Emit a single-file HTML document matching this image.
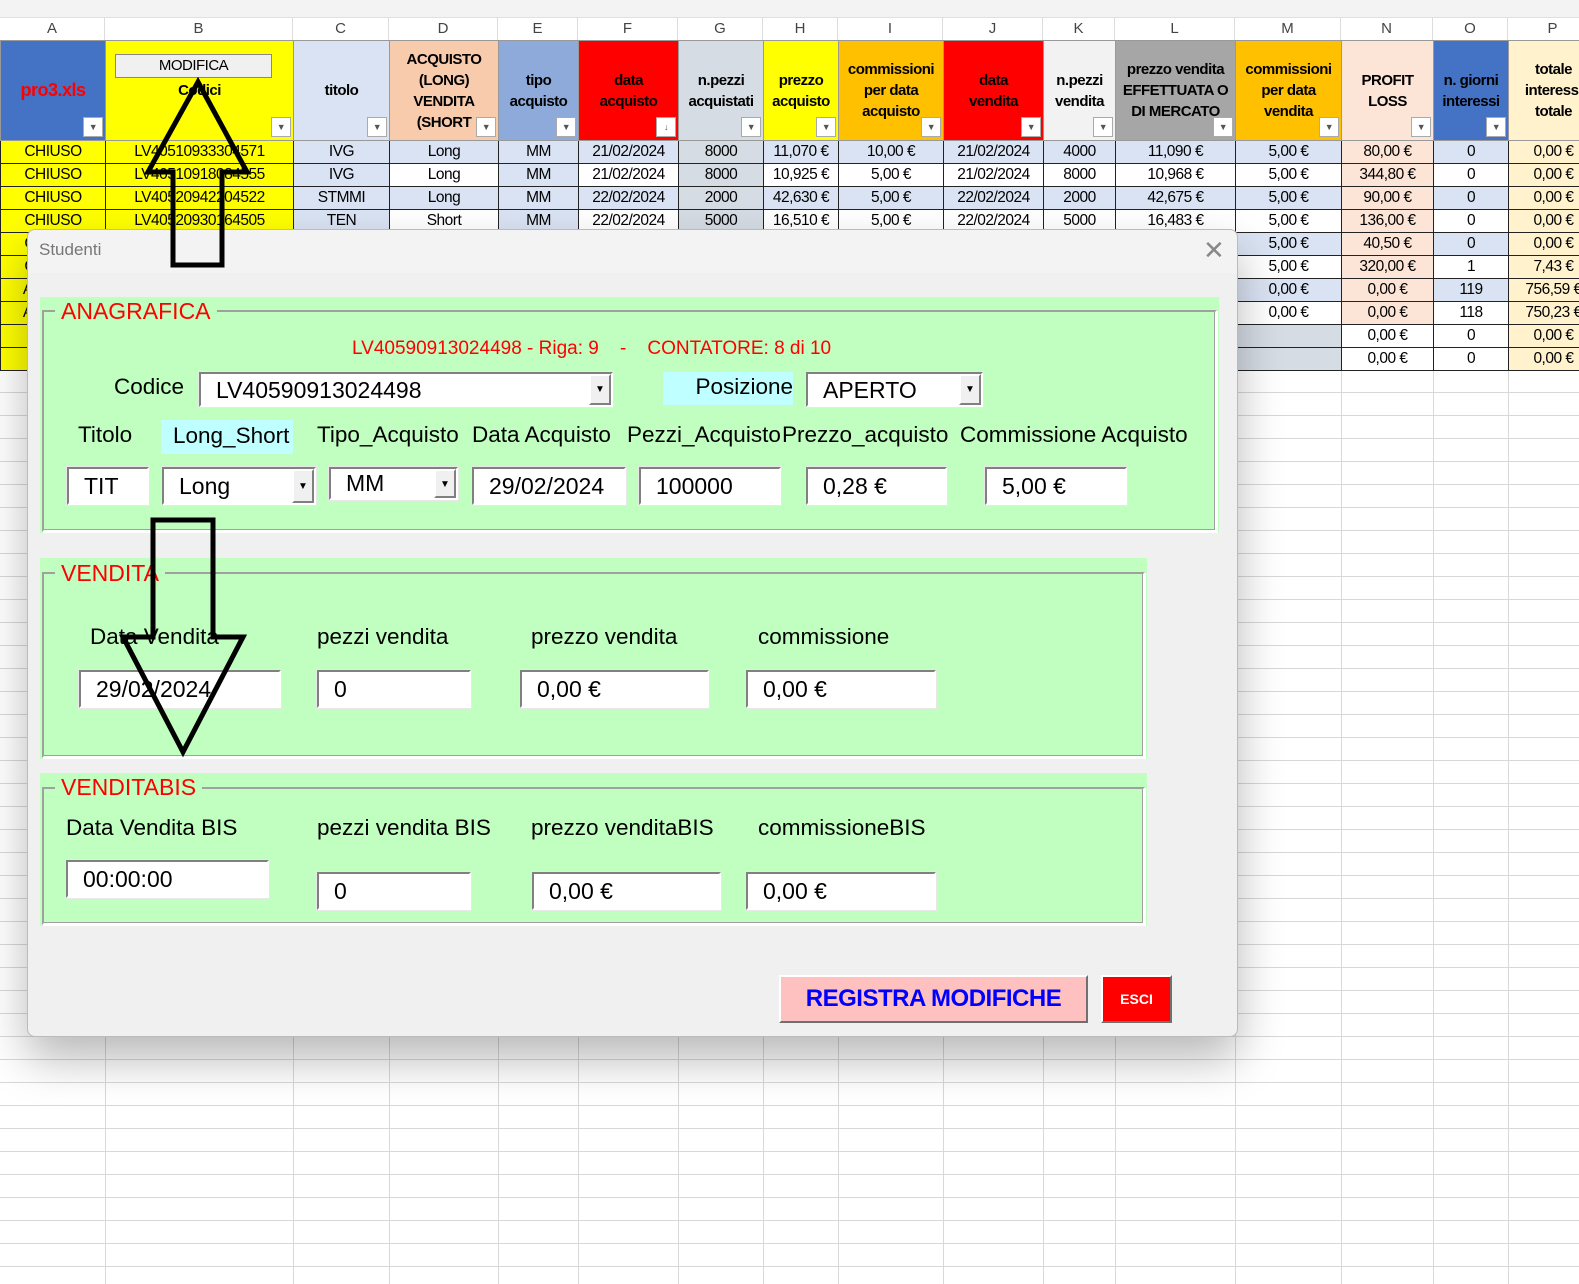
<!DOCTYPE html>
<html><head><meta charset="utf-8">
<style>
*{box-sizing:border-box;margin:0;padding:0}
body{width:1579px;height:1284px;overflow:hidden;background:#fff;position:relative;font-family:"Liberation Sans",sans-serif}
#top{position:absolute;left:0;top:0;width:1579px;height:18px;background:#f3f3f3;border-bottom:1px solid #e0e0e0}
#colh{position:absolute;left:0;top:18px;height:22px;width:1700px;display:flex;background:#fff}
#colh div{height:22px;line-height:22px;text-align:center;font-size:15px;color:#444;border-right:1px solid #ddd}
#grid{position:absolute;left:0;top:370px;width:1579px;height:914px;background:repeating-linear-gradient(to bottom,#fff 0,#fff 22px,#d8d8d8 22px,#d8d8d8 23px)}
.vl{position:absolute;top:370px;height:914px;width:1px;background:#d8d8d8}
table{position:absolute;left:0;top:40px;border-collapse:collapse;table-layout:fixed;width:1598px}
td{border:1px solid #222;font-size:15.5px;letter-spacing:-0.5px;text-align:center;height:23px;white-space:nowrap;overflow:hidden;padding:0;color:#000}
tr.h td{height:100px;font-weight:bold;font-size:15px;letter-spacing:-0.5px;line-height:21px;white-space:normal;position:relative;border-color:#999;padding:0 3px}
.dd{position:absolute;right:2px;bottom:3px;width:20px;height:20px;background:#fff;border:1px solid #aaa;font-size:9px;line-height:19px;color:#555;font-weight:normal}
.y{background:#ff0}.b{background:#dae3f3}.g{background:#d6dce4}.p{background:#fce4d6}.c{background:#fff2cc}.w{background:#fff}
#dlg{position:absolute;left:27px;top:229px;width:1211px;height:808px;background:#f0f0f0;border:1px solid #bbb;border-radius:8px;box-shadow:0 22px 45px rgba(0,0,0,.28)}
#tb{position:absolute;left:0;top:0;width:100%;height:43px;background:#f3f3f3;border-radius:8px 8px 0 0}
.a{position:absolute}
.fr{position:absolute;background:#c0ffc0}
.fb{position:absolute;border:2px solid #a0a0a0;border-right-color:#fff;border-bottom-color:#fff;box-shadow:inset -1px -1px 0 #a0a0a0,1px 1px 0 #fff}
.ft{position:absolute;background:#c0ffc0;color:#f00;font-size:23px;padding:0 6px;line-height:26px}
.lb{position:absolute;font-size:22.5px;line-height:28px;color:#000;white-space:nowrap}
.in{position:absolute;background:#fff;border:2px solid #808080;border-right-color:#fff;border-bottom-color:#fff;outline:1px solid #e8e8e8;font-size:23px;line-height:32px;padding-left:15px;white-space:nowrap;overflow:hidden}
.btn{position:absolute;right:0;top:0;bottom:0;width:22px;background:#f0f0f0;border-left:2px solid #fff;border-top:2px solid #fff;border-right:2px solid #808080;border-bottom:2px solid #808080;font-size:10px;line-height:28px;text-align:center;padding:0}
</style></head><body>
<div id="top"></div>
<div id="colh">
<div style="width:105px">A</div><div style="width:188px">B</div><div style="width:96px">C</div><div style="width:109px">D</div><div style="width:80px">E</div><div style="width:100px">F</div><div style="width:85px">G</div><div style="width:75px">H</div><div style="width:105px">I</div><div style="width:100px">J</div><div style="width:72px">K</div><div style="width:120px">L</div><div style="width:106px">M</div><div style="width:92px">N</div><div style="width:75px">O</div><div style="width:90px">P</div>
</div>
<div id="grid"></div>
<div class="vl" style="left:105px"></div><div class="vl" style="left:293px"></div><div class="vl" style="left:389px"></div><div class="vl" style="left:498px"></div><div class="vl" style="left:578px"></div><div class="vl" style="left:678px"></div><div class="vl" style="left:763px"></div><div class="vl" style="left:838px"></div><div class="vl" style="left:943px"></div><div class="vl" style="left:1043px"></div><div class="vl" style="left:1115px"></div><div class="vl" style="left:1235px"></div><div class="vl" style="left:1341px"></div><div class="vl" style="left:1433px"></div><div class="vl" style="left:1508px"></div>
<table>
<colgroup><col style="width:105px"><col style="width:188px"><col style="width:96px"><col style="width:109px"><col style="width:80px"><col style="width:100px"><col style="width:85px"><col style="width:75px"><col style="width:105px"><col style="width:100px"><col style="width:72px"><col style="width:120px"><col style="width:106px"><col style="width:92px"><col style="width:75px"><col style="width:90px"></colgroup>
<tr class="h">
<td style="background:#4472c4;color:#f00;font-size:18px">pro3.xls<div class="dd">▼</div></td>
<td class="y"><div style="position:absolute;left:9px;top:13px;width:157px;height:24px;background:#f0f0f0;border:1px solid #888;font-weight:normal;font-size:15px;line-height:22px">MODIFICA</div><div style="margin-top:0">Codici</div><div class="dd">▼</div></td>
<td class="b">titolo<div class="dd">▼</div></td>
<td style="background:#f8cbad">ACQUISTO (LONG) VENDITA (SHORT<div class="dd">▼</div></td>
<td style="background:#8eaadb">tipo acquisto<div class="dd">▼</div></td>
<td style="background:#f00">data<br>acquisto<div class="dd">↓</div></td>
<td class="g">n.pezzi acquistati<div class="dd">▼</div></td>
<td class="y">prezzo acquisto<div class="dd">▼</div></td>
<td style="background:#ffc000">commissioni per data acquisto<div class="dd">▼</div></td>
<td style="background:#f00">data<br>vendita<div class="dd">▼</div></td>
<td style="background:#f2f2f2">n.pezzi vendita<div class="dd">▼</div></td>
<td style="background:#a6a6a6">prezzo vendita EFFETTUATA O DI MERCATO<div class="dd">▼</div></td>
<td style="background:#ffc000">commissioni per data vendita<div class="dd">▼</div></td>
<td class="p">PROFIT<br>LOSS<div class="dd">▼</div></td>
<td style="background:#4472c4">n. giorni interessi<div class="dd">▼</div></td>
<td class="c">totale interessi totale</td>
</tr>
<tr><td class="y">CHIUSO</td><td class="y">LV40510933304571</td><td class="b">IVG</td><td class="b">Long</td><td class="b">MM</td><td class="b">21/02/2024</td><td class="g">8000</td><td class="b">11,070 €</td><td class="b">10,00 €</td><td class="b">21/02/2024</td><td class="b">4000</td><td class="b">11,090 €</td><td class="b">5,00 €</td><td class="p">80,00 €</td><td class="b">0</td><td class="c">0,00 €</td></tr>
<tr><td class="y">CHIUSO</td><td class="y">LV40510918084555</td><td class="b">IVG</td><td class="w">Long</td><td class="b">MM</td><td class="w">21/02/2024</td><td class="g">8000</td><td class="w">10,925 €</td><td class="w">5,00 €</td><td class="w">21/02/2024</td><td class="w">8000</td><td class="w">10,968 €</td><td class="w">5,00 €</td><td class="p">344,80 €</td><td class="w">0</td><td class="c">0,00 €</td></tr>
<tr><td class="y">CHIUSO</td><td class="y">LV40520942204522</td><td class="b">STMMI</td><td class="b">Long</td><td class="b">MM</td><td class="b">22/02/2024</td><td class="g">2000</td><td class="b">42,630 €</td><td class="b">5,00 €</td><td class="b">22/02/2024</td><td class="b">2000</td><td class="b">42,675 €</td><td class="b">5,00 €</td><td class="p">90,00 €</td><td class="b">0</td><td class="c">0,00 €</td></tr>
<tr><td class="y">CHIUSO</td><td class="y">LV40520930164505</td><td class="b">TEN</td><td class="w">Short</td><td class="b">MM</td><td class="w">22/02/2024</td><td class="g">5000</td><td class="w">16,510 €</td><td class="w">5,00 €</td><td class="w">22/02/2024</td><td class="w">5000</td><td class="w">16,483 €</td><td class="w">5,00 €</td><td class="p">136,00 €</td><td class="w">0</td><td class="c">0,00 €</td></tr>
<tr><td class="y">CHIUSO</td><td class="y"></td><td class="b"></td><td class="b"></td><td class="b"></td><td class="b"></td><td class="g"></td><td class="b"></td><td class="b"></td><td class="b"></td><td class="b"></td><td class="b"></td><td class="b">5,00 €</td><td class="p">40,50 €</td><td class="b">0</td><td class="c">0,00 €</td></tr>
<tr><td class="y">CHIUSO</td><td class="y"></td><td class="b"></td><td class="w"></td><td class="b"></td><td class="w"></td><td class="g"></td><td class="w"></td><td class="w"></td><td class="w"></td><td class="w"></td><td class="w"></td><td class="w">5,00 €</td><td class="p">320,00 €</td><td class="w">1</td><td class="c">7,43 €</td></tr>
<tr><td class="y">APERTO</td><td class="y"></td><td class="b"></td><td class="b"></td><td class="b"></td><td class="b"></td><td class="g"></td><td class="b"></td><td class="b"></td><td class="b"></td><td class="b"></td><td class="b"></td><td class="b">0,00 €</td><td class="p">0,00 €</td><td class="b">119</td><td class="c">756,59 €</td></tr>
<tr><td class="y">APERTO</td><td class="y"></td><td class="b"></td><td class="w"></td><td class="b"></td><td class="w"></td><td class="g"></td><td class="w"></td><td class="w"></td><td class="w"></td><td class="w"></td><td class="w"></td><td class="w">0,00 €</td><td class="p">0,00 €</td><td class="w">118</td><td class="c">750,23 €</td></tr>
<tr><td class="y"></td><td class="y"></td><td class="b"></td><td class="b"></td><td class="b"></td><td class="b"></td><td class="g"></td><td class="b"></td><td class="b"></td><td class="b"></td><td class="b"></td><td class="b"></td><td class="g"></td><td class="w">0,00 €</td><td class="w">0</td><td class="c">0,00 €</td></tr>
<tr><td class="y"></td><td class="y"></td><td class="b"></td><td class="w"></td><td class="b"></td><td class="w"></td><td class="g"></td><td class="w"></td><td class="w"></td><td class="w"></td><td class="w"></td><td class="w"></td><td class="g"></td><td class="w">0,00 €</td><td class="w">0</td><td class="c">0,00 €</td></tr>
</table>

<div id="dlg">
<div id="tb"></div>
<div class="a" style="left:11px;top:10px;font-size:17px;color:#777">Studenti</div>
<div class="a" style="left:1175px;top:5px;font-size:26px;color:#888;font-weight:200">✕</div>

<div class="fr" style="left:12px;top:67px;width:1179px;height:236px"></div>
<div class="fb" style="left:14px;top:80px;width:1175px;height:222px"></div>
<div class="ft" style="left:27px;top:68px">ANAGRAFICA</div>
<div class="lb" style="left:324px;top:105px;color:#f00;font-size:19px">LV40590913024498 - Riga: 9 &nbsp;&nbsp;&nbsp;- &nbsp;&nbsp;&nbsp;CONTATORE: 8 di 10</div>
<div class="lb" style="left:86px;top:143px">Codice</div>
<div class="in" style="left:171px;top:142px;width:414px;height:35px">LV40590913024498<div class="btn">▼</div></div>
<div class="lb" style="left:635px;top:142px;width:130px;height:33px;background:#c0ffff;text-align:right;line-height:30px">Posizione</div>
<div class="in" style="left:778px;top:142px;width:177px;height:35px">APERTO<div class="btn">▼</div></div>
<div class="lb" style="left:50px;top:191px">Titolo</div>
<div class="lb" style="left:133px;top:190px;width:132px;height:34px;background:#c0ffff;padding-left:12px;line-height:32px">Long_Short</div>
<div class="lb" style="left:289px;top:191px">Tipo_Acquisto</div>
<div class="lb" style="left:444px;top:191px">Data Acquisto</div>
<div class="lb" style="left:599px;top:191px">Pezzi_Acquisto</div>
<div class="lb" style="left:754px;top:191px">Prezzo_acquisto</div>
<div class="lb" style="left:932px;top:191px">Commissione Acquisto</div>
<div class="in" style="left:39px;top:237px;width:82px;height:38px;line-height:34px">TIT</div>
<div class="in" style="left:134px;top:237px;width:154px;height:38px;line-height:34px">Long<div class="btn" style="line-height:32px">▼</div></div>
<div class="in" style="left:301px;top:237px;width:129px;height:33px;line-height:29px">MM<div class="btn">▼</div></div>
<div class="in" style="left:444px;top:237px;width:154px;height:38px;line-height:34px">29/02/2024</div>
<div class="in" style="left:611px;top:237px;width:142px;height:38px;line-height:34px">100000</div>
<div class="in" style="left:778px;top:237px;width:141px;height:38px;line-height:34px">0,28 €</div>
<div class="in" style="left:957px;top:237px;width:142px;height:38px;line-height:34px">5,00 €</div>

<div class="fr" style="left:12px;top:328px;width:1107px;height:201px"></div>
<div class="fb" style="left:14px;top:342px;width:1103px;height:186px"></div>
<div class="ft" style="left:27px;top:330px">VENDITA</div>
<div class="lb" style="left:62px;top:393px">Data Vendita</div>
<div class="lb" style="left:289px;top:393px">pezzi vendita</div>
<div class="lb" style="left:503px;top:393px">prezzo vendita</div>
<div class="lb" style="left:730px;top:393px">commissione</div>
<div class="in" style="left:51px;top:440px;width:202px;height:38px;line-height:34px">29/02/2024</div>
<div class="in" style="left:289px;top:440px;width:154px;height:38px;line-height:34px">0</div>
<div class="in" style="left:492px;top:440px;width:189px;height:38px;line-height:34px">0,00 €</div>
<div class="in" style="left:718px;top:440px;width:190px;height:38px;line-height:34px">0,00 €</div>

<div class="fr" style="left:12px;top:543px;width:1107px;height:153px"></div>
<div class="fb" style="left:14px;top:557px;width:1103px;height:138px"></div>
<div class="ft" style="left:27px;top:544px">VENDITABIS</div>
<div class="lb" style="left:38px;top:584px">Data Vendita BIS</div>
<div class="lb" style="left:289px;top:584px">pezzi vendita BIS</div>
<div class="lb" style="left:503px;top:584px">prezzo venditaBIS</div>
<div class="lb" style="left:730px;top:584px">commissioneBIS</div>
<div class="in" style="left:38px;top:630px;width:203px;height:38px;line-height:34px">00:00:00</div>
<div class="in" style="left:289px;top:642px;width:154px;height:38px;line-height:34px">0</div>
<div class="in" style="left:504px;top:642px;width:189px;height:38px;line-height:34px">0,00 €</div>
<div class="in" style="left:718px;top:642px;width:190px;height:38px;line-height:34px">0,00 €</div>

<div class="a" style="left:751px;top:745px;width:309px;height:48px;background:#ffc0c0;border:2px solid #fff;border-right-color:#707070;border-bottom-color:#707070;color:#00f;font-weight:bold;font-size:24px;line-height:44px;text-align:center;letter-spacing:-0.5px">REGISTRA MODIFICHE</div>
<div class="a" style="left:1073px;top:745px;width:71px;height:48px;background:#f00;border:2px solid #fff;border-right-color:#707070;border-bottom-color:#707070;color:#fff;font-weight:bold;font-size:14px;line-height:44px;text-align:center">ESCI</div>
</div>

<svg class="a" style="left:0;top:0" width="1579" height="1284" viewBox="0 0 1579 1284">
<polygon points="198,82 247,172 222,172 222,265 173,265 173,172 148,172" fill="none" stroke="#000" stroke-width="5"/>
<polygon points="153,520 213,520 213,637 243,637 183,752 123,637 153,637" fill="none" stroke="#000" stroke-width="5"/>
</svg>
</body></html>
